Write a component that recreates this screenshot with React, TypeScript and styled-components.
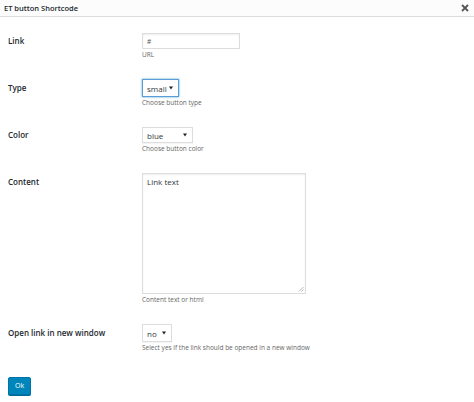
import React from "react";
import styled, { createGlobalStyle } from "styled-components";

const Global = createGlobalStyle`
  html, body { margin: 0; padding: 0; background: #fff; }
  body { font-family: "Open Sans", "Noto Sans", sans-serif; color: #23282d; }
  * { box-sizing: border-box; }
`;

const Dialog = styled.div`
  width: 474px;
  height: 402px;
  background: #fff;
  display: flex;
  flex-direction: column;
`;

const Header = styled.div`
  height: 17px;
  background: #fcfcfc;
  border-bottom: 1px solid #dddddd;
  display: flex;
  align-items: center;
  justify-content: space-between;
  padding: 0 4px 0 4px;
`;

const Title = styled.div`
  font-size: 7.5px;
  font-weight: 600;
  color: #23282d;
  line-height: 10px;
`;

const Close = styled.div`
  width: 9px;
  height: 9px;
  display: flex;
  align-items: center;
  justify-content: center;
  margin-right: 1px;
`;

const Form = styled.div`
  display: flex;
  flex-direction: column;
  gap: 19px;
  padding: 16px 8px 0 8px;
`;

const Row = styled.div`
  display: grid;
  grid-template-columns: 134px 1fr;
  align-items: start;
`;

const Label = styled.div<{ $h: number; $top?: boolean }>`
  font-size: 8px;
  font-weight: 600;
  color: #23282d;
  line-height: 10px;
  height: ${(p) => (p.$top ? "auto" : `${p.$h}px`)};
  padding-top: ${(p) => (p.$top ? "4px" : "0")};
  display: flex;
  align-items: center;
`;

const Field = styled.div`
  display: flex;
  flex-direction: column;
  align-items: flex-start;
`;

const Help = styled.div`
  margin-top: 1px;
  font-size: 6.5px;
  line-height: 10px;
  color: #666;
`;

const TextInput = styled.div`
  width: 98px;
  height: 16px;
  border: 1px solid #dddddd;
  box-shadow: inset 0 1px 2px rgba(0, 0, 0, 0.07);
  font-size: 6.5px;
  color: #555;
  padding-left: 4px;
  display: flex;
  align-items: center;
`;

const Select = styled.div<{ $w: number; $h: number; $focus?: boolean }>`
  width: ${(p) => p.$w}px;
  height: ${(p) => p.$h}px;
  border: 1px solid ${(p) => (p.$focus ? "#5b9dd9" : "#dddddd")};
  box-shadow: ${(p) =>
    p.$focus ? "0 0 2px rgba(30,140,190,0.8)" : "0 1px 1px rgba(0,0,0,0.04)"};
  background: #fff;
  display: flex;
  align-items: center;
  justify-content: space-between;
  padding: 0 5px 0 4px;
  font-size: 8px;
  color: #32373c;
`;

const Arrow = () => (
  <svg width="4" height="4" viewBox="0 0 4 4" style={{ marginTop: -1 }}>
    <path d="M0 0.5 L4 0.5 L2 3.5 Z" fill="#222" />
  </svg>
);

const TextArea = styled.div`
  width: 164px;
  height: 121px;
  border: 1px solid #dddddd;
  box-shadow: inset 0 1px 2px rgba(0, 0, 0, 0.07);
  font-size: 8px;
  color: #32373c;
  padding: 3px 4px;
  line-height: 10px;
  position: relative;
`;

const Grip = styled.svg`
  position: absolute;
  right: 1px;
  bottom: 1px;
`;

const Footer = styled.div`
  display: flex;
  padding: 24px 8px 0 8px;
`;

const OkButton = styled.button`
  width: 23px;
  height: 18px;
  padding: 0;
  background: #0085ba;
  border: 1px solid #0073aa;
  border-radius: 2px;
  box-shadow: 0 1px 0 #006799;
  color: #fff;
  font-family: "Open Sans", "Noto Sans", sans-serif;
  font-size: 7px;
  line-height: 16px;
  text-align: center;
`;

export default function App() {
  return (
    <>
      <Global />
      <Dialog>
        <Header>
          <Title>ET button Shortcode</Title>
          <Close>
            <svg width="8" height="8" viewBox="0 0 8 8">
              <path d="M1 1 L7 7 M7 1 L1 7" stroke="#555" strokeWidth="1.8" />
            </svg>
          </Close>
        </Header>
        <Form>
          <Row>
            <Label $h={16}>Link</Label>
            <Field>
              <TextInput>#</TextInput>
              <Help>URL</Help>
            </Field>
          </Row>
          <Row>
            <Label $h={18}>Type</Label>
            <Field>
              <Select $w={37} $h={18} $focus>
                <span>small</span>
                <Arrow />
              </Select>
              <Help>Choose button type</Help>
            </Field>
          </Row>
          <Row>
            <Label $h={16}>Color</Label>
            <Field>
              <Select $w={51} $h={16}>
                <span>blue</span>
                <Arrow />
              </Select>
              <Help>Choose button color</Help>
            </Field>
          </Row>
          <Row>
            <Label $h={10} $top>
              Content
            </Label>
            <Field>
              <TextArea>
                Link text
                <Grip width="6" height="6" viewBox="0 0 6 6">
                  <path d="M1 5.5 L5.5 1 M3.5 5.5 L5.5 3.5" stroke="#999" strokeWidth="0.7" />
                </Grip>
              </TextArea>
              <Help>Content text or html</Help>
            </Field>
          </Row>
          <Row>
            <Label $h={18}>Open link in new window</Label>
            <Field>
              <Select $w={30} $h={18}>
                <span>no</span>
                <Arrow />
              </Select>
              <Help>Select yes if the link should be opened in a new window</Help>
            </Field>
          </Row>
        </Form>
        <Footer>
          <OkButton>Ok</OkButton>
        </Footer>
      </Dialog>
    </>
  );
}
